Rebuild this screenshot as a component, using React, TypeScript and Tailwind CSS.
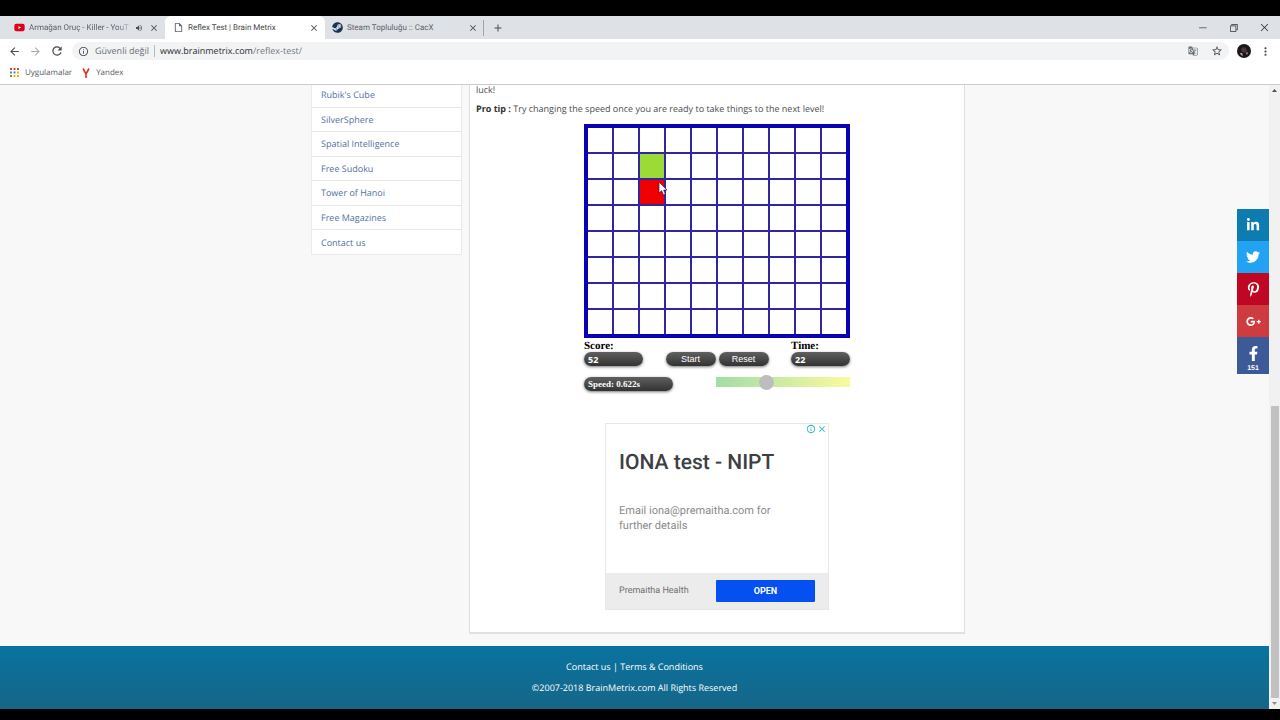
import React, { useState } from "react";
import {
  FaFacebookF,
  FaGooglePlusG,
  FaLinkedinIn,
  FaPinterestP,
  FaSteam,
  FaTwitter,
  FaYoutube,
} from "react-icons/fa";
import {
  MdAdd,
  MdArrowBack,
  MdArrowForward,
  MdClose,
  MdGTranslate,
  MdInfoOutline,
  MdMoreVert,
  MdOutlineInsertDriveFile,
  MdRefresh,
  MdStarBorder,
  MdVolumeUp,
} from "react-icons/md";
import {
  VscChromeClose,
  VscChromeMinimize,
  VscChromeRestore,
} from "react-icons/vsc";

const sidebarLinks = [
  "Rubik's Cube",
  "SilverSphere",
  "Spatial Intelligence",
  "Free Sudoku",
  "Tower of Hanoi",
  "Free Magazines",
  "Contact us",
];

const COLUMNS = 10;
const ROWS = 8;
const cells = Array.from({ length: COLUMNS * ROWS }, (_, index) => index);

const appColors = [
  "#db4437", "#db4437", "#db4437",
  "#4a9c5c", "#4285f4", "#f4b400",
  "#4a9c5c", "#f4b400", "#f4b400",
];

const pill =
  "h-[14px] rounded-full bg-linear-to-b from-[#606060] to-[#333333] text-white shadow-[0_1px_3px_#777777]";

const TabStrip = () => (
  <div className="flex h-[23px] items-center bg-[#dee1e6] font-[Roboto,sans-serif] text-[8px] text-[#5f6267]">
    <div className="flex w-[165px] items-center pl-[14px] pr-[6px]">
      <FaYoutube className="size-[11px] shrink-0 text-[#e0001b]" />
      <span className="ml-1 w-[104px] whitespace-nowrap mask-r-from-85%">
        Armağan Oruç - Killer - YouT
      </span>
      <MdVolumeUp className="ml-[2px] size-2 shrink-0 text-[#4b4d51]" />
      <button aria-label="Close tab" className="ml-auto text-[#4b4d51]">
        <MdClose className="size-[10px]" />
      </button>
    </div>
    <div className="flex h-full w-[160px] items-center rounded-t-md bg-white pl-2 pr-[6px]">
      <MdOutlineInsertDriveFile className="size-[11px] shrink-0 text-[#5f6368]" />
      <span className="ml-1 whitespace-nowrap text-[#45484c]">
        Reflex Test | Brain Metrix
      </span>
      <button aria-label="Close tab" className="ml-auto text-[#4b4d51]">
        <MdClose className="size-[10px]" />
      </button>
    </div>
    <div className="flex h-4 w-[159px] items-center border-r border-[#a0a3a8] pl-[7px] pr-[5px]">
      <FaSteam className="size-[11px] shrink-0 text-[#173358]" />
      <span className="ml-1 whitespace-nowrap">Steam Topluluğu :: CacX</span>
      <button aria-label="Close tab" className="ml-auto text-[#4b4d51]">
        <MdClose className="size-[10px]" />
      </button>
    </div>
    <button aria-label="New tab" className="ml-2 text-[#4b4d51]">
      <MdAdd className="size-3" />
    </button>
    <div className="ml-auto flex items-center gap-5 pr-[10px] text-[#333333]">
      <button aria-label="Minimize">
        <VscChromeMinimize className="size-[11px]" />
      </button>
      <button aria-label="Restore">
        <VscChromeRestore className="size-[11px]" />
      </button>
      <button aria-label="Close">
        <VscChromeClose className="size-[11px]" />
      </button>
    </div>
  </div>
);

const Toolbar = () => (
  <div className="flex h-6 items-center bg-white pl-2 pr-2 text-[#4b4d51]">
    <button aria-label="Back">
      <MdArrowBack className="size-[13px]" />
    </button>
    <button aria-label="Forward" className="ml-2 text-[#a8abb0]">
      <MdArrowForward className="size-[13px]" />
    </button>
    <button aria-label="Reload" className="ml-2">
      <MdRefresh className="size-[14px]" />
    </button>
    <div className="ml-2 flex h-[18px] flex-1 items-center rounded-full bg-[#f1f3f4] px-[6px] text-[9px]">
      <MdInfoOutline className="size-[11px] shrink-0" />
      <span className="ml-[6px] border-r border-[#b5b8bc] pr-[5px] leading-3 whitespace-nowrap text-[#6b6e73]">
        Güvenli değil
      </span>
      <span className="ml-[5px] flex-1 text-[#77797d]">
        <span className="text-[#2c2e31]">www.brainmetrix.com</span>/reflex-test/
      </span>
      <MdGTranslate className="size-[10px] text-[#6b6e73]" />
      <MdStarBorder className="ml-[13px] size-3" />
    </div>
    <svg viewBox="0 0 14 14" className="ml-2 size-[14px]">
      <circle cx="7" cy="7" r="7" fill="#1d1719" />
      <path d="M4 5l2-2 3 1 1 3-2 2-3-1z" fill="#4b3539" />
      <path d="M3 9l2 0 1 3-2-1zM9 9l2-1-1 3z" fill="#b9b2b4" />
    </svg>
    <button aria-label="Menu" className="ml-2">
      <MdMoreVert className="size-[13px]" />
    </button>
  </div>
);

const BookmarksBar = () => (
  <div className="flex h-[22px] items-center border-b border-[#c9cbce] bg-white pb-[2px] pl-[10px] text-[8px] text-[#55585c]">
    <a href="#apps" className="flex items-center gap-[6px]">
      <svg viewBox="0 0 9 9" className="size-[9px]">
        {appColors.map((color, index) => (
          <rect
            key={index}
            x={(index % 3) * 3.5}
            y={Math.floor(index / 3) * 3.5}
            width="2"
            height="2"
            fill={color}
          />
        ))}
      </svg>
      Uygulamalar
    </a>
    <a href="#yandex" className="ml-[10px] flex items-center gap-[6px]">
      <svg viewBox="0 0 8 10" className="h-[10px] w-2">
        <path
          d="M1 0.5L4 6M7 0.5L4 6V10"
          fill="none"
          stroke="#e03127"
          strokeWidth="1.6"
        />
      </svg>
      Yandex
    </a>
  </div>
);

const Sidebar = () => (
  <nav className="w-[151px] shrink-0">
    <ul className="-mt-[2px] flex h-[172px] flex-col border-x border-b border-[#ebebeb] bg-white">
      {sidebarLinks.map((link) => (
        <li
          key={link}
          className="flex flex-1 items-center border-b border-[#e6e6e6] px-[9px] last:border-b-0"
        >
          <a href="#game" className="text-[9px] text-[#5470a5]">
            {link}
          </a>
        </li>
      ))}
    </ul>
  </nav>
);

const ReflexGame = () => {
  const [speedState, setSpeedState] = useState(36);

  return (
    <div className="w-[266px] font-['Liberation_Serif',serif] text-[11px] leading-3 font-bold text-black">
      <div className="relative grid grid-cols-10 gap-[2px] border-4 border-[#0a00b4] bg-[#3226a0]">
        {cells.map((cell) => (
          <div
            key={cell}
            className={`h-6 ${
              cell === 12
                ? "bg-[#9bdb35]"
                : cell === 22
                  ? "bg-[#ee0000]"
                  : "bg-white"
            }`}
          />
        ))}
        <svg
          viewBox="0 0 10 15"
          className="absolute top-[53px] left-[70px] h-[15px] w-[10px]"
        >
          <path
            d="M1 1v11l2.6-2.3L5.300 13.800l2-.9L5.700 9H9z"
            fill="#ffffff"
            stroke="#3b1a35"
            strokeWidth="0.7"
          />
        </svg>
      </div>

      <div className="mt-[2px] flex items-end justify-between">
        <div className="w-[59px]">
          <label htmlFor="score">Score:</label>
          <input
            id="score"
            readOnly
            value="52"
            className={`${pill} block w-full px-1 font-['Open_Sans',sans-serif] text-[9px]`}
          />
        </div>
        <div className="flex gap-[3px] font-['Liberation_Sans',sans-serif] text-[9px] font-normal">
          <button className={`${pill} w-[50px]`}>Start</button>
          <button className={`${pill} w-[50px]`}>Reset</button>
        </div>
        <div className="w-[59px]">
          <label htmlFor="time">Time:</label>
          <input
            id="time"
            readOnly
            value="22"
            className={`${pill} block w-full px-1 font-['Open_Sans',sans-serif] text-[9px]`}
          />
        </div>
      </div>

      <div className="mt-[11px] flex items-start justify-between">
        <input
          aria-label="Speed"
          readOnly
          value="Speed: 0.622s"
          className={`${pill} w-[89px] px-1 text-[9px]`}
        />
        <input
          type="range"
          aria-label="Speed setting"
          min="0"
          max="100"
          value={speedState}
          onChange={(e) => setSpeedState(Number(e.target.value))}
          className="h-[10px] w-[134px] appearance-none bg-linear-to-r from-[#a3dca8] to-[#fafa9c] [&::-webkit-slider-thumb]:size-[15px] [&::-webkit-slider-thumb]:appearance-none [&::-webkit-slider-thumb]:rounded-full [&::-webkit-slider-thumb]:bg-[#bdbdbd]"
        />
      </div>
    </div>
  );
};

const AdCard = () => (
  <div className="mt-8 w-[224px] border border-[#e8e8e8] bg-white font-[Roboto,sans-serif]">
    <div className="flex justify-end gap-px pr-px text-[#1fb5c4]">
      <MdInfoOutline className="size-[10px]" />
      <MdClose className="size-[10px]" />
    </div>
    <h2 className="mt-[13px] px-[13px] text-[21px] leading-8 font-medium text-[#3c4043]">
      IONA test - NIPT
    </h2>
    <p className="mt-6 px-[13px] text-[11px] leading-[15px] text-[#8a8a8a]">
      Email iona@premaitha.com for
      <br />
      further details
    </p>
    <div className="mt-10 flex h-9 items-center justify-between bg-[#ececec] px-[13px]">
      <span className="text-[9px] text-[#6f6f6f]">Premaitha Health</span>
      <button className="h-[22px] w-[99px] rounded-[1px] bg-[#0550f0] text-[9px] font-bold text-white">
        OPEN
      </button>
    </div>
  </div>
);

const ShareBar = () => (
  <div className="absolute top-[124px] right-0 flex w-8 flex-col text-white">
    <a
      href="#linkedin"
      aria-label="LinkedIn"
      className="flex h-8 items-center justify-center bg-[#0d7cb0]"
    >
      <FaLinkedinIn className="size-[14px]" />
    </a>
    <a
      href="#twitter"
      aria-label="Twitter"
      className="flex h-8 items-center justify-center bg-[#22a2f2]"
    >
      <FaTwitter className="size-[14px]" />
    </a>
    <a
      href="#pinterest"
      aria-label="Pinterest"
      className="flex h-8 items-center justify-center bg-[#bf0622]"
    >
      <FaPinterestP className="size-[15px]" />
    </a>
    <a
      href="#google"
      aria-label="Google Plus"
      className="flex h-8 items-center justify-center bg-[#cf3c40]"
    >
      <FaGooglePlusG className="size-[15px]" />
    </a>
    <a
      href="#facebook"
      aria-label="Facebook"
      className="flex h-[37px] flex-col items-center justify-end bg-[#3c5998] pb-[1px]"
    >
      <FaFacebookF className="size-[15px]" />
      <span className="mt-1 font-['Liberation_Sans',sans-serif] text-[7px] leading-2 font-bold">
        151
      </span>
    </a>
  </div>
);

const ScrollBar = () => (
  <div className="flex w-[11px] shrink-0 flex-col items-center bg-[#f1f1f1]">
    <svg viewBox="0 0 11 11" className="size-[11px]">
      <path d="M3 7L5.500 4L8 7z" fill="#505050" />
    </svg>
    <div className="grow-[309]" />
    <div className="w-2 grow-[292] bg-[#c1c1c1]" />
    <svg viewBox="0 0 11 11" className="size-[11px]">
      <path d="M3 4L5.500 7L8 4z" fill="#8a8a8a" />
    </svg>
  </div>
);

export default function App() {
  return (
    <div className="flex min-h-screen flex-col bg-black pt-4 pb-[11px] font-['Open_Sans',sans-serif] [text-rendering:geometricPrecision]">
      <header>
        <TabStrip />
        <Toolbar />
        <BookmarksBar />
      </header>
      <div className="flex flex-1">
        <div className="relative flex min-w-0 flex-1 flex-col overflow-hidden bg-[#f8f8f8]">
          <div className="flex flex-1 justify-center gap-[7px] pb-3 pl-[7px]">
            <Sidebar />
            <main className="flex w-[496px] flex-col items-center border-x border-b-2 border-[#e0e0e0] bg-white px-[6px] pb-[22px] text-[9px] leading-5 text-[#4d4d4d]">
              <p className="self-start leading-[9px]">luck!</p>
              <p className="mt-[5px] mb-[5px] self-start">
                <b className="text-[#333333]">Pro tip :</b> Try changing the
                speed once you are ready to take things to the next level!
              </p>
              <ReflexGame />
              <AdCard />
            </main>
          </div>
          <footer className="flex h-[63px] flex-col items-center bg-linear-to-b from-[#0873a0] to-[#156688] pt-[11px] text-[9px] leading-5 text-white">
            <p>
              <a href="#contact">Contact us</a> |{" "}
              <a href="#terms">Terms &amp; Conditions</a>
            </p>
            <p className="mt-[1px]">
              ©2007-2018 BrainMetrix.com All Rights Reserved
            </p>
          </footer>
          <ShareBar />
        </div>
        <ScrollBar />
      </div>
    </div>
  );
}
